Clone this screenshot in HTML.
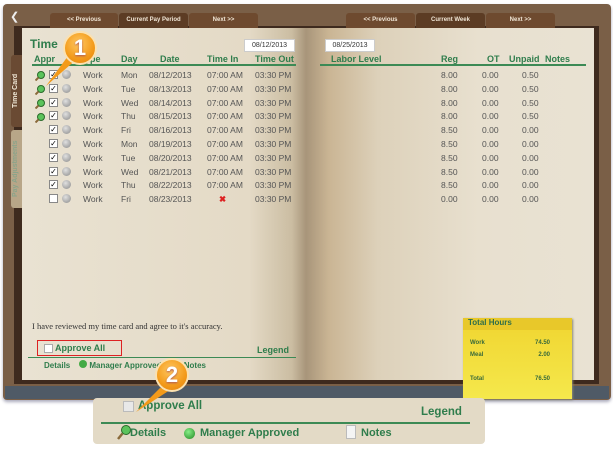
<!DOCTYPE html>
<html><head><style>
*{margin:0;padding:0;box-sizing:border-box}
body{width:613px;height:456px;background:#fff;position:relative;overflow:hidden;font-family:"Liberation Sans",sans-serif}
.a{position:absolute}
.book{left:3px;top:4px;width:608px;height:396px;background:#7a5f47;border-radius:4px;box-shadow:0 2px 3px #aab}
.strip{left:5px;top:386px;width:604px;height:13px;background:#4f5a66}
.frame{left:14px;top:26px;width:585px;height:358px;background:#3e2a1e}
.pl{left:22px;top:28px;width:284px;height:352px;background:linear-gradient(90deg,#e9e2d2 0%,#e4dac6 80%,#cbbda2 95%,#a8957a 100%)}
.pr{left:306px;top:28px;width:288px;height:352px;background:linear-gradient(90deg,#a8957a 0%,#cab594 8%,#ddd1ba 25%,#e8e0cf 60%,#e9e2d3 100%)}
.tab{top:13px;height:15px;background:#6e4a2f;color:#f0e6d6;font-size:6px;font-weight:bold;text-align:center;line-height:15px;border-radius:3px 3px 0 0}
.g{color:#2f7d4c;font-weight:bold;font-size:9px}
.t{font-size:8.5px;color:#555}
.hl{height:2px;background:#3c8a55}
.cb{width:9px;height:9px;background:#fff;border:1px solid #888;font-size:8px;line-height:8px;text-align:center;color:#000}
.rd{width:9px;height:9px;border-radius:50%;background:radial-gradient(circle at 40% 35%,#e0e0e0,#8a8a8a)}
.mag{width:10px;height:10px}
.num{width:34px;height:34px;border-radius:50%;background:radial-gradient(circle at 45% 35%,#ffc861,#f39a1a 60%,#e07e0c);border:2px solid #fbe1b0;color:#fff;font-weight:bold;font-size:22px;text-align:center;line-height:30px;text-shadow:0 1px 2px #a55}
.vt{writing-mode:vertical-rl;transform:rotate(180deg);font-size:7px;font-weight:bold;text-align:center}
</style></head><body>
<div class="a book"></div>
<div class="a strip"></div>
<div class="a frame"></div>
<div class="a" style="left:10px;top:10px;color:#eee;font-size:11px">&#10094;</div>
<div class="a tab" style="left:50px;width:68px">&lt;&lt; Previous</div>
<div class="a tab" style="left:119px;width:69px;background:#5c3c24">Current Pay Period</div>
<div class="a tab" style="left:189px;width:69px">Next &gt;&gt;</div>
<div class="a tab" style="left:346px;width:69px">&lt;&lt; Previous</div>
<div class="a tab" style="left:416px;width:69px;background:#5c3c24">Current Week</div>
<div class="a tab" style="left:486px;width:69px">Next &gt;&gt;</div>
<div class="a" style="left:11px;top:55px;width:12px;height:72px;background:#6a4a33;border-radius:3px 0 0 3px"></div>
<div class="a vt" style="left:12px;top:60px;height:62px;color:#f2ead9">Time Card</div>
<div class="a" style="left:11px;top:130px;width:12px;height:78px;background:#b8a688;border-radius:3px 0 0 3px"></div>
<div class="a vt" style="left:12px;top:134px;height:70px;color:#8aa48a">Pay Adjustments</div>
<div class="a pl"></div>
<div class="a pr"></div>
<div class="a" style="left:244px;top:39px;width:51px;height:13px;background:#fff;border:1px solid #ccc;font-size:7px;text-align:center;line-height:11px;color:#333">08/12/2013</div>
<div class="a" style="left:325px;top:39px;width:50px;height:13px;background:#fff;border:1px solid #ccc;font-size:7px;text-align:center;line-height:11px;color:#333">08/25/2013</div>
<div class="a g" style="left:30px;top:37px;font-size:12px">Time</div>
<div class="a g" style="left:34px;top:54px">Appr</div>
<div class="a g" style="left:85px;top:54px">ype</div>
<div class="a g" style="left:121px;top:54px">Day</div>
<div class="a g" style="left:160px;top:54px">Date</div>
<div class="a g" style="left:207px;top:54px">Time In</div>
<div class="a g" style="left:255px;top:54px">Time Out</div>
<div class="a hl" style="left:32px;top:64px;width:264px"></div>
<div class="a g" style="left:331px;top:54px">Labor Level</div>
<div class="a g" style="left:441px;top:54px">Reg</div>
<div class="a g" style="left:487px;top:54px">OT</div>
<div class="a g" style="left:509px;top:54px">Unpaid</div>
<div class="a g" style="left:545px;top:54px">Notes</div>
<div class="a hl" style="left:320px;top:64px;width:266px"></div>
<div class="a" style="left:0;top:68px;width:613px">
<div class="a mag" style="left:35px;top:0"><svg width="10" height="10"><circle cx="6" cy="4" r="3.5" fill="#5cc35c" stroke="#2b6b2b"/><line x1="3.5" y1="6.5" x2="0.5" y2="9.5" stroke="#8a6a3a" stroke-width="2"/></svg></div>
<div class="a mag" style="left:35px;top:14px"><svg width="10" height="10"><circle cx="6" cy="4" r="3.5" fill="#5cc35c" stroke="#2b6b2b"/><line x1="3.5" y1="6.5" x2="0.5" y2="9.5" stroke="#8a6a3a" stroke-width="2"/></svg></div>
<div class="a mag" style="left:35px;top:28px"><svg width="10" height="10"><circle cx="6" cy="4" r="3.5" fill="#5cc35c" stroke="#2b6b2b"/><line x1="3.5" y1="6.5" x2="0.5" y2="9.5" stroke="#8a6a3a" stroke-width="2"/></svg></div>
<div class="a mag" style="left:35px;top:42px"><svg width="10" height="10"><circle cx="6" cy="4" r="3.5" fill="#5cc35c" stroke="#2b6b2b"/><line x1="3.5" y1="6.5" x2="0.5" y2="9.5" stroke="#8a6a3a" stroke-width="2"/></svg></div>
</div>
<div class="a" style="left:0;top:69px;width:613px;font-size:8.5px;color:#555;line-height:13.8px">
<div class="a" style="left:49px;top:1px;line-height:9px"><div class="cb">&#10003;</div><div class="cb" style="margin-top:4.8px">&#10003;</div><div class="cb" style="margin-top:4.8px">&#10003;</div><div class="cb" style="margin-top:4.8px">&#10003;</div><div class="cb" style="margin-top:4.8px">&#10003;</div><div class="cb" style="margin-top:4.8px">&#10003;</div><div class="cb" style="margin-top:4.8px">&#10003;</div><div class="cb" style="margin-top:4.8px">&#10003;</div><div class="cb" style="margin-top:4.8px">&#10003;</div><div class="cb" style="margin-top:4.8px"></div></div>
<div class="a" style="left:62px;top:1px"><div class="rd"></div><div class="rd" style="margin-top:4.8px"></div><div class="rd" style="margin-top:4.8px"></div><div class="rd" style="margin-top:4.8px"></div><div class="rd" style="margin-top:4.8px"></div><div class="rd" style="margin-top:4.8px"></div><div class="rd" style="margin-top:4.8px"></div><div class="rd" style="margin-top:4.8px"></div><div class="rd" style="margin-top:4.8px"></div><div class="rd" style="margin-top:4.8px"></div></div>
<div class="a" style="left:83px">Work<br>Work<br>Work<br>Work<br>Work<br>Work<br>Work<br>Work<br>Work<br>Work</div>
<div class="a" style="left:121px">Mon<br>Tue<br>Wed<br>Thu<br>Fri<br>Mon<br>Tue<br>Wed<br>Thu<br>Fri</div>
<div class="a" style="left:149px">08/12/2013<br>08/13/2013<br>08/14/2013<br>08/15/2013<br>08/16/2013<br>08/19/2013<br>08/20/2013<br>08/21/2013<br>08/22/2013<br>08/23/2013</div>
<div class="a" style="left:207px">07:00 AM<br>07:00 AM<br>07:00 AM<br>07:00 AM<br>07:00 AM<br>07:00 AM<br>07:00 AM<br>07:00 AM<br>07:00 AM<br><span style="color:#d22;font-weight:bold;margin-left:12px">&#10006;</span></div>
<div class="a" style="left:255px">03:30 PM<br>03:30 PM<br>03:30 PM<br>03:30 PM<br>03:30 PM<br>03:30 PM<br>03:30 PM<br>03:30 PM<br>03:30 PM<br>03:30 PM</div>
<div class="a" style="left:441px">8.00<br>8.00<br>8.00<br>8.00<br>8.50<br>8.50<br>8.50<br>8.50<br>8.50<br>0.00</div>
<div class="a" style="left:482px">0.00<br>0.00<br>0.00<br>0.00<br>0.00<br>0.00<br>0.00<br>0.00<br>0.00<br>0.00</div>
<div class="a" style="left:522px">0.50<br>0.50<br>0.50<br>0.50<br>0.00<br>0.00<br>0.00<br>0.00<br>0.00<br>0.00</div>
</div>
<div class="a" style="left:32px;top:321px;font-size:8.5px;color:#333;font-family:'Liberation Serif',serif">I have reviewed my time card and agree to it's accuracy.</div>
<div class="a" style="left:37px;top:340px;width:85px;height:16px;border:1.5px solid #d22"></div>
<div class="a cb" style="left:44px;top:344px;border-color:#aaa"></div>
<div class="a g" style="left:55px;top:343px">Approve All</div>
<div class="a g" style="left:257px;top:345px">Legend</div>
<div class="a hl" style="left:28px;top:357px;width:268px;height:1px"></div>
<div class="a g" style="left:44px;top:360px;font-size:8px">Details &nbsp;&nbsp; <span style="display:inline-block;width:8px;height:8px;border-radius:50%;background:#4a4"></span> Manager Approved &nbsp;&nbsp;&nbsp;&nbsp;&nbsp;&nbsp;&nbsp;&nbsp; Notes</div>
<div class="a" style="left:463px;top:318px;width:109px;height:81px;background:linear-gradient(180deg,#f0d530,#f5e84c);box-shadow:1px 1px 2px #887"></div>
<div class="a" style="left:463px;top:318px;width:109px;height:12px;background:#e8c82a;color:#2f6e4a;font-size:8px;font-weight:bold;padding-left:5px">Total Hours</div>
<div class="a" style="left:470px;top:337px;width:80px;font-size:6px;color:#3a6a3a;font-weight:bold;line-height:12px">Work<span style="float:right">74.50</span><br>Meal<span style="float:right">2.00</span><br><br>Total<span style="float:right">76.50</span></div>
<div class="a" style="left:93px;top:398px;width:392px;height:46px;background:#e3dac6;border-radius:4px"></div>
<div class="a cb" style="left:123px;top:401px;width:11px;height:11px;background:#e8e8e8;border-color:#bbb"></div>
<div class="a g" style="left:138px;top:400px;font-size:11.5px">Approve All</div>
<div class="a g" style="left:421px;top:406px;font-size:11.5px">Legend</div>
<div class="a hl" style="left:101px;top:422px;width:369px"></div>
<div class="a" style="left:117px;top:425px"><svg width="14" height="15"><circle cx="9" cy="5" r="4.5" fill="#5cc35c" stroke="#2b6b2b"/><line x1="5.5" y1="8.5" x2="1" y2="14" stroke="#8a6a3a" stroke-width="2.5"/></svg></div>
<div class="a g" style="left:130px;top:427px;font-size:11px">Details</div>
<div class="a" style="left:184px;top:428px;width:11px;height:11px;border-radius:50%;background:radial-gradient(circle at 40% 35%,#8e8,#282)"></div>
<div class="a g" style="left:200px;top:427px;font-size:11px">Manager Approved</div>
<div class="a" style="left:346px;top:425px;width:10px;height:14px;background:#f4f4f4;border:1px solid #bbb"></div>
<div class="a g" style="left:361px;top:427px;font-size:11px">Notes</div>
<svg class="a" style="left:0;top:0" width="613" height="456"><polygon points="68,56 78,58 46,86" fill="#f39a1a"/><polygon points="160,388 170,390 136,412" fill="#f39a1a"/></svg>
<div class="a num" style="left:63px;top:31px">1</div>
<div class="a num" style="left:155px;top:358px">2</div>
</body></html>
